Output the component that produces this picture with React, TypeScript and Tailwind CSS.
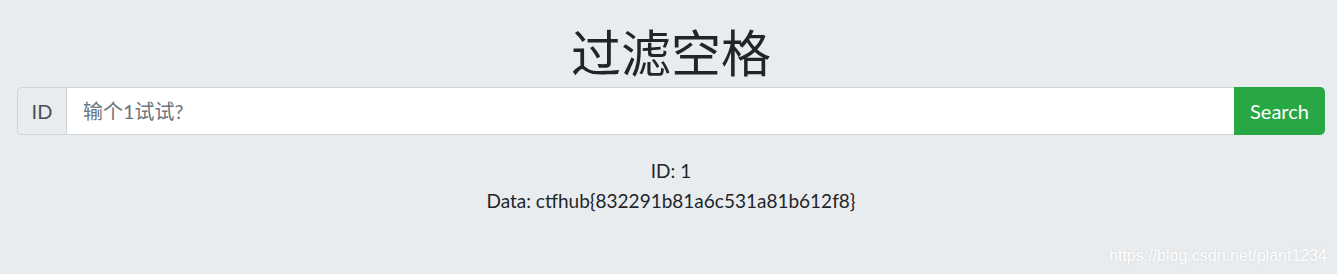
import React from 'react';

export default function App() {
  return (
    <div className="relative h-[274px] w-full overflow-hidden bg-[#e9ecef] text-[#212529] [font-family:Lato,'Noto_Sans_CJK_SC',sans-serif]">
      <div className="ml-[17px] mr-[12px] pt-[20px]">
        <h1 className="mb-[7px] text-center text-[50px] leading-[60px] font-normal [font-family:'Noto_Sans_CJK_SC',sans-serif]">过滤空格</h1>

        <form className="flex h-[48px] w-full" onSubmit={(e) => e.preventDefault()}>
          <div className="flex w-[50px] items-center justify-center rounded-l-[5px] border border-[#ced4da] bg-[#e9ecef] text-[20px] text-[#495057]">ID</div>
          <input
            className="min-w-0 flex-1 border-y border-[#ced4da] bg-white px-4 text-[20px] text-[#495057] outline-none placeholder:text-[#6c757d] [font-family:Lato,'Noto_Sans_CJK_SC',sans-serif]"
            placeholder="输个1试试?"
          />
          <button type="submit" className="w-[91px] rounded-r-[5px] bg-[#28a745] text-[20px] text-white">Search</button>
        </form>

        <div className="mt-[21px] text-center text-[19px] leading-[30px]">
          <div>ID: 1</div>
          <div>Data: ctfhub{'{'}832291b81a6c531a81b612f8{'}'}</div>
        </div>
      </div>

      <div className="absolute bottom-[9px] right-[10px] text-[16px] leading-[18px] text-white [font-family:'Liberation_Sans',Arial,sans-serif] [text-shadow:0_0_2px_rgba(0,0,0,0.12)]">
        https://blog.csdn.net/plant1234
      </div>
    </div>
  );
}
